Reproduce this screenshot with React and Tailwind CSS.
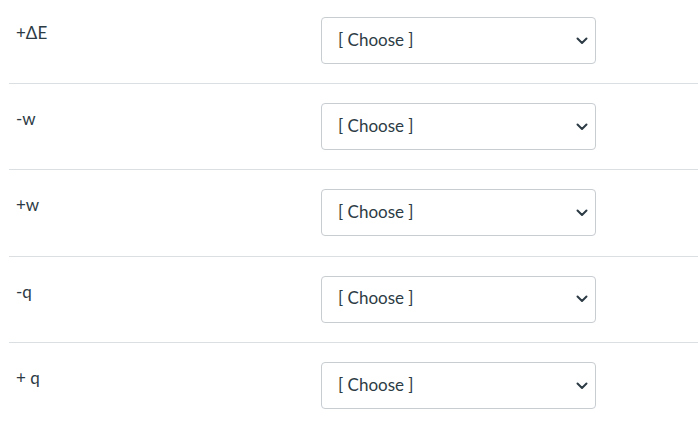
import React from 'react';

const rows = ['+ΔE', '-w', '+w', '-q', '+ q'];

// Chevron drawn to match the native select arrow
const Chevron = () => (
  <svg width="12" height="8" viewBox="0 0 12 8" className="shrink-0">
    <path d="M1.5 1.5 L6 6 L10.5 1.5" fill="none" stroke="#2d3b45" strokeWidth="2" strokeLinecap="round" strokeLinejoin="round" />
  </svg>
);

const Row = ({ label, first, last }) => (
  <div
    className={`flex items-start ml-[9px] ${first ? 'pt-[17px] pb-[19px]' : 'pt-[19px] pb-[19.4px]'} ${last ? '' : 'border-b border-[#dcdfe1]'}`}
  >
    <div className="w-[312px] shrink-0 pl-[7px] pt-[3px] text-[17px] leading-[25px] text-[#2d3b45]">
      {label}
    </div>
    <div className="w-[275px] h-[47px] flex items-center justify-between pl-[16px] pr-[7px] pb-[3px] border border-[#c7cdd1] rounded-[4px] bg-white">
      <span className="text-[17px] leading-[25px] text-[#2d3b45]">[ Choose ]</span>
      <span className="pt-[3px] flex"><Chevron /></span>
    </div>
  </div>
);

const App = () => {
  return (
    <div className="w-[698px] h-[426px] bg-white overflow-hidden font-['Lato','Liberation_Sans',sans-serif]">
      {rows.map((r, i) => (
        <Row key={i} label={r} first={i === 0} last={i === rows.length - 1} />
      ))}
    </div>
  );
};

export default App;
